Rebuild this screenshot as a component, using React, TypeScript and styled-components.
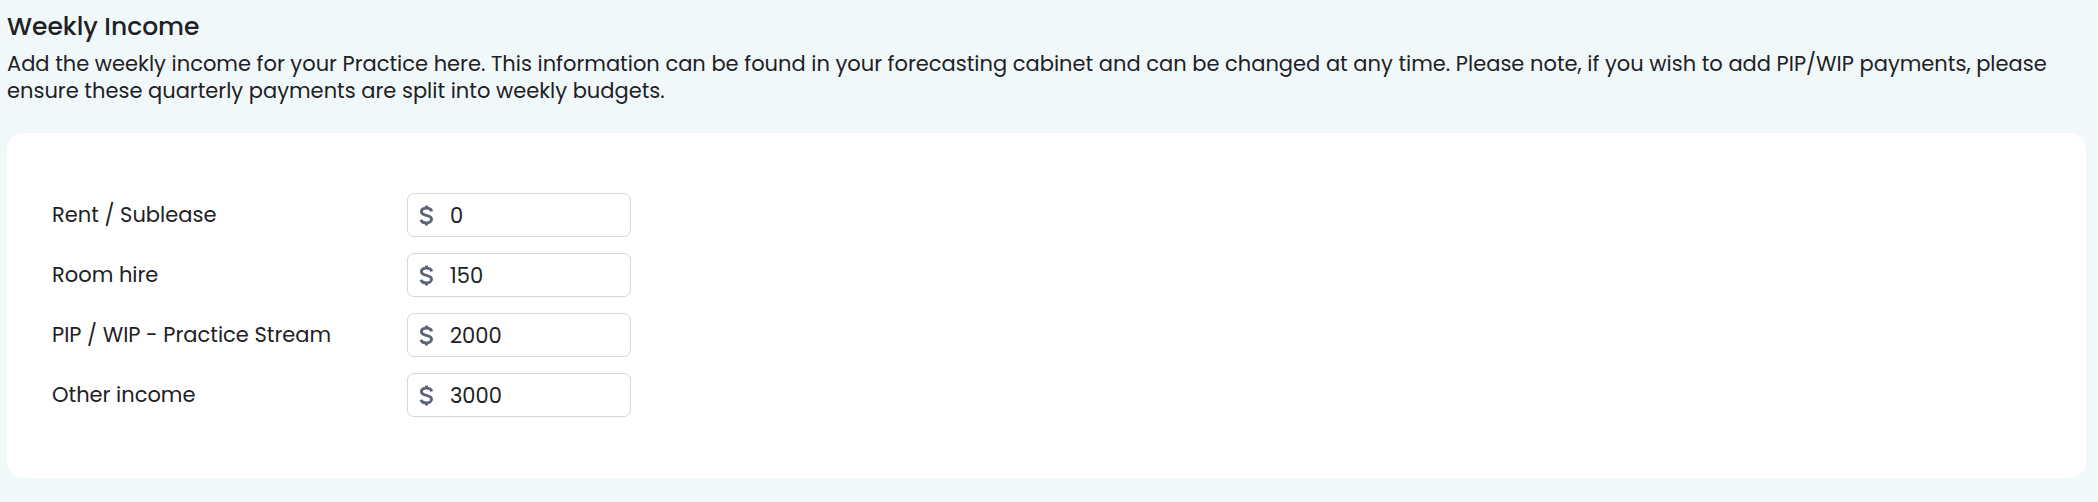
import styled, { createGlobalStyle } from 'styled-components';

const GlobalStyle = createGlobalStyle`
  body {
    margin: 0;
    background: #f1f8fa;
    font-family: Poppins, Inter, "Noto Sans", sans-serif;
    color: #1e2125;
  }
`;

const Page = styled.div`
  padding: 10px 12px 24px 7px;
`;

const Header = styled.div`
  margin-bottom: 29px;
`;

const Title = styled.h2`
  margin: 0 0 6px;
  font-size: 25px;
  line-height: 34px;
  font-weight: 500;
`;

const Description = styled.p`
  margin: 0;
  font-size: 21px;
  line-height: 27px;
  font-weight: 400;
`;

const Card = styled.div`
  background: #ffffff;
  border-radius: 16px;
  padding: 60px 45px 61px;
  display: grid;
  grid-template-columns: 355px 224px;
  row-gap: 16px;
  align-items: center;
`;

const Label = styled.label`
  font-size: 21px;
  line-height: 28px;
`;

const InputBox = styled.div`
  height: 44px;
  box-sizing: border-box;
  border: 1px solid #d2d5d9;
  border-radius: 7px;
  display: flex;
  align-items: center;
  gap: 16px;
  padding: 0 11px;
  color: #5a6678;

  svg {
    flex-shrink: 0;
  }
`;

const Input = styled.input`
  border: none;
  outline: none;
  min-width: 0;
  flex: 1;
  font: inherit;
  font-size: 21px;
  color: #1e2125;
  background: transparent;
  padding: 0;
`;

function DollarIcon() {
  return (
    <svg width="15" height="21" viewBox="0 0 14 20" fill="none" stroke="currentColor" strokeWidth="2.8">
      <path d="M7 0.5V3M7 17V19.5" />
      <path d="M12 6C11.4 4 9.7 3 7 3C4.1 3 2.2 4.4 2.2 6.4C2.2 8.6 4.2 9.2 7 9.9C9.8 10.6 11.8 11.3 11.8 13.5C11.8 15.6 9.8 17 7 17C4.2 17 2.3 15.9 1.7 14" />
    </svg>
  );
}

interface IncomeItem {
  label: string;
  value: string;
}

const items: IncomeItem[] = [
  { label: 'Rent / Sublease', value: '0' },
  { label: 'Room hire', value: '150' },
  { label: 'PIP / WIP - Practice Stream', value: '2000' },
  { label: 'Other income', value: '3000' },
];

function App() {
  return (
    <Page>
      <GlobalStyle />
      <Header>
        <Title>Weekly Income</Title>
        <Description>
          Add the weekly income for your Practice here. This information can be found in your
          forecasting cabinet and can be changed at any time. Please note, if you wish to add
          PIP/WIP payments, please ensure these quarterly payments are split into weekly budgets.
        </Description>
      </Header>
      <Card>
        {items.map((item) => (
          <>
            <Label key={item.label + '-l'}>{item.label}</Label>
            <InputBox key={item.label + '-i'}>
              <DollarIcon />
              <Input defaultValue={item.value} />
            </InputBox>
          </>
        ))}
      </Card>
    </Page>
  );
}

export default App;
